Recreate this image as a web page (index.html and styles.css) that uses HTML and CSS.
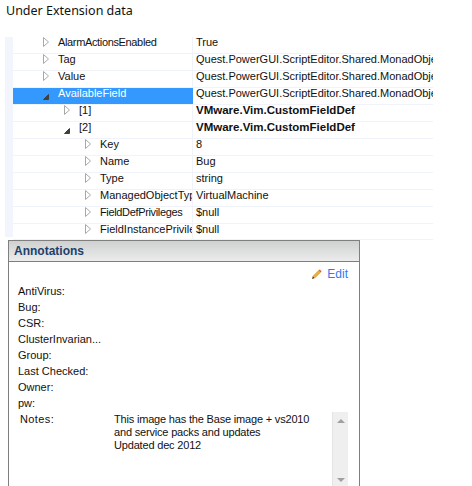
FILE: index.html
```html
<!DOCTYPE html>
<html>
<head>
<meta charset="utf-8">
<title>Under Extension data</title>
<link rel="stylesheet" href="styles.css">
</head>
<body>
<div class="title">Under Extension data</div>
<div class="tree">
  <div class="row"><div class="name l1"><svg class="arrow" viewBox="0 0 6 10"><path d="M.5.5 5.5 5 .5 9.500z"/></svg><span class="label tight">AlarmActionsEnabled</span></div><div class="value">True</div></div>
  <div class="row"><div class="name l1"><svg class="arrow" viewBox="0 0 6 10"><path d="M.5.5 5.5 5 .5 9.500z"/></svg><span class="label">Tag</span></div><div class="value">Quest.PowerGUI.ScriptEditor.Shared.MonadObject</div></div>
  <div class="row"><div class="name l1"><svg class="arrow" viewBox="0 0 6 10"><path d="M.5.5 5.5 5 .5 9.500z"/></svg><span class="label">Value</span></div><div class="value">Quest.PowerGUI.ScriptEditor.Shared.MonadObject</div></div>
  <div class="row"><div class="name l1 selected"><svg class="arrow open" viewBox="0 0 6 10"><path d="M.5 7.500 5.500 2.500v5z"/></svg><span class="label">AvailableField</span></div><div class="value">Quest.PowerGUI.ScriptEditor.Shared.MonadObject</div></div>
  <div class="row"><div class="name l2"><svg class="arrow" viewBox="0 0 6 10"><path d="M.5.5 5.5 5 .5 9.500z"/></svg><span class="label">[1]</span></div><div class="value bold">VMware.Vim.CustomFieldDef</div></div>
  <div class="row"><div class="name l2"><svg class="arrow open" viewBox="0 0 6 10"><path d="M.5 7.500 5.500 2.500v5z"/></svg><span class="label">[2]</span></div><div class="value bold">VMware.Vim.CustomFieldDef</div></div>
  <div class="row"><div class="name l3"><svg class="arrow" viewBox="0 0 6 10"><path d="M.5.5 5.5 5 .5 9.500z"/></svg><span class="label">Key</span></div><div class="value">8</div></div>
  <div class="row"><div class="name l3"><svg class="arrow" viewBox="0 0 6 10"><path d="M.5.5 5.5 5 .5 9.500z"/></svg><span class="label">Name</span></div><div class="value">Bug</div></div>
  <div class="row"><div class="name l3"><svg class="arrow" viewBox="0 0 6 10"><path d="M.5.5 5.5 5 .5 9.500z"/></svg><span class="label">Type</span></div><div class="value">string</div></div>
  <div class="row"><div class="name l3"><svg class="arrow" viewBox="0 0 6 10"><path d="M.5.5 5.5 5 .5 9.500z"/></svg><span class="label">ManagedObjectType</span></div><div class="value">VirtualMachine</div></div>
  <div class="row"><div class="name l3"><svg class="arrow" viewBox="0 0 6 10"><path d="M.5.5 5.5 5 .5 9.500z"/></svg><span class="label tight">FieldDefPrivileges</span></div><div class="value">$null</div></div>
  <div class="row"><div class="name l3"><svg class="arrow" viewBox="0 0 6 10"><path d="M.5.5 5.5 5 .5 9.500z"/></svg><span class="label">FieldInstancePrivileges</span></div><div class="value">$null</div></div>
</div>
<div class="panel">
  <div class="panel-head">Annotations</div>
  <div class="edit-row">
    <svg class="pencil" viewBox="0 0 11 11"><path d="M0 11 1 8 3 10z" fill="#3a2a10"/><path d="M1 8 7.500 1.500 9.500 3.500 3 10z" fill="#f2b233" stroke="#b8741a" stroke-width=".5"/><path d="M7.500 1.500 8.500.5 10.500 2.500 9.500 3.500z" fill="#e2503a"/></svg>
    <a class="edit">Edit</a>
  </div>
  <ul class="attrs">
    <li>AntiVirus:</li>
    <li>Bug:</li>
    <li>CSR:</li>
    <li>ClusterInvarian...</li>
    <li>Group:</li>
    <li>Last Checked:</li>
    <li>Owner:</li>
    <li>pw:</li>
  </ul>
  <div class="notes">
    <div class="notes-label">Notes:</div>
    <div class="notes-text">This image has the Base image + vs2010<br>and service packs and updates<br>Updated dec 2012</div>
    <div class="scrollbar">
      <svg class="sb-arrow" viewBox="0 0 8 4"><path d="M0 4 4 0 8 4z"/></svg>
      <svg class="sb-arrow" viewBox="0 0 8 4"><path d="M0 0 4 4 8 0z"/></svg>
    </div>
  </div>
</div>
</body>
</html>
```
FILE: styles.css
```css
html, body {
  margin: 0;
  padding: 0;
  height: 486px;
  overflow: hidden;
  background: #fff;
  font-family: "Liberation Sans", Arial, sans-serif;
  font-size: 11px;
  color: #111;
}
.title {
  height: 37px;
  box-sizing: border-box;
  padding: 2px 0 0 6px;
  font-family: "Noto Sans", sans-serif;
  font-size: 12.5px;
  line-height: 18px;
  color: #111;
}
.tree {
  margin-left: 5px;
  width: 428px;
  height: 200px;
  padding-left: 8px;
  box-sizing: border-box;
  background: linear-gradient(to right, #f2f6fc 8px, #fff 8px);
}
.row {
  display: grid;
  grid-template-columns: 180px 240px;
  height: 17px;
  box-sizing: border-box;
  border-bottom: 1px solid #f0f3fa;
  line-height: 11px;
}
.row:last-child { height: 16px; }
.name {
  display: flex;
  align-items: flex-start;
  overflow: hidden;
  white-space: nowrap;
  border-right: 1px solid #f0f3fa;
  height: 16px;
  box-sizing: border-box;
}
.l1 { padding-left: 30px; }
.l2 { padding-left: 51px; }
.l3 { padding-left: 72px; }
.arrow {
  width: 6px;
  height: 10px;
  flex: none;
  fill: #fff;
  stroke: #a8a8a8;
  stroke-width: 1;
}
.arrow.open {
  margin-top: 4px;
  fill: #404040;
  stroke: #404040;
}
.label { margin-left: 9px; }
.tight { letter-spacing: -0.35px; }
.selected {
  background: #3399ff;
  color: #fff;
  border-right-color: #3399ff;
}
.value {
  padding-left: 3px;
  overflow: hidden;
  white-space: nowrap;
}
.bold { font-weight: 700; font-size: 11.5px; }
.panel {
  margin: 3px 0 0 8px;
  width: 352px;
  height: 250px;
  box-sizing: border-box;
  border: 1px solid #7f7f7f;
  border-bottom: 0;
}
.panel-head {
  height: 21px;
  box-sizing: border-box;
  border-bottom: 1px solid #7f7f7f;
  background: linear-gradient(#cfd0d0, #ececec);
  padding-left: 5px;
  font-size: 12px;
  font-weight: 700;
  line-height: 20px;
  color: #1d3f6b;
}
.edit-row {
  display: flex;
  justify-content: flex-end;
  align-items: center;
  gap: 5px;
  height: 21px;
  padding: 3px 11px 0 0;
  box-sizing: border-box;
}
.pencil { width: 10px; height: 10px; }
.edit { color: #2f7bf5; font-size: 12px; }
.attrs {
  list-style: none;
  margin: 0;
  padding: 0 0 0 9px;
  line-height: 16px;
}
.notes {
  display: flex;
  padding-left: 11px;
  height: 75px;
}
.notes-label {
  width: 94px;
  flex: none;
  padding-top: 2px;
  line-height: 13px;
  letter-spacing: 0.4px;
}
.notes-text {
  width: 218px;
  flex: none;
  padding-top: 2px;
  line-height: 13px;
  letter-spacing: -0.18px;
  white-space: nowrap;
}
.scrollbar {
  width: 16px;
  height: 74px;
  margin-top: 1px;
  flex: none;
  box-sizing: border-box;
  background: #efefef;
  border-left: 1px solid #e4e4e4;
  display: flex;
  flex-direction: column;
  justify-content: space-between;
  align-items: center;
  padding: 7px 0 4px;
}
.sb-arrow { width: 8px; height: 4px; fill: #a0a0a0; }
```
